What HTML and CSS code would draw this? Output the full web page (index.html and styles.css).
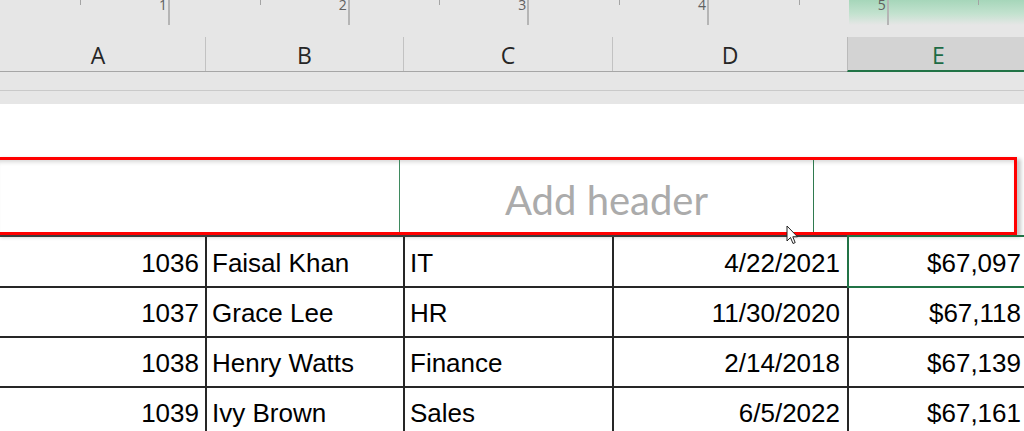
FILE: index.html
```html
<!DOCTYPE html>
<html>
<head>
<meta charset="utf-8">
<link rel="stylesheet" href="styles.css">
</head>
<body>
<div class="ruler">
  <div class="seg"><span class="num">1</span></div>
  <div class="seg"><span class="num">2</span></div>
  <div class="seg"><span class="num">3</span></div>
  <div class="seg"><span class="num">4</span></div>
  <div class="seg"><span class="num">5</span></div>
  <div class="seg"><span class="num">6</span></div>
</div>
<div class="colheads">
  <div class="ch ch-a">A</div>
  <div class="ch ch-b">B</div>
  <div class="ch ch-c">C</div>
  <div class="ch ch-d">D</div>
  <div class="ch ch-e">E</div>
</div>
<div class="band"></div>
<div class="band2"></div>
<div class="sheet">
  <div class="hdrbox">
    <div class="sec sec-left"></div>
    <div class="sec sec-mid">Add header</div>
    <div class="sec sec-right"></div>
  </div>
  <div class="tbl">
    <div class="row row-first">
      <div class="cell c-a num-r">1036</div>
      <div class="cell c-b">Faisal Khan</div>
      <div class="cell c-c">IT</div>
      <div class="cell c-d num-r">4/22/2021</div>
      <div class="cell c-e num-r selected">$67,097</div>
    </div>
    <div class="row">
      <div class="cell c-a num-r">1037</div>
      <div class="cell c-b">Grace Lee</div>
      <div class="cell c-c">HR</div>
      <div class="cell c-d num-r">11/30/2020</div>
      <div class="cell c-e num-r">$67,118</div>
    </div>
    <div class="row">
      <div class="cell c-a num-r">1038</div>
      <div class="cell c-b">Henry Watts</div>
      <div class="cell c-c">Finance</div>
      <div class="cell c-d num-r">2/14/2018</div>
      <div class="cell c-e num-r">$67,139</div>
    </div>
    <div class="row">
      <div class="cell c-a num-r">1039</div>
      <div class="cell c-b">Ivy Brown</div>
      <div class="cell c-c">Sales</div>
      <div class="cell c-d num-r">6/5/2022</div>
      <div class="cell c-e num-r">$67,161</div>
    </div>
  </div>
</div>
<svg class="cursor" width="14" height="22" viewBox="0 0 14 22">
  <path d="M1 1 L1 16 L4.5 12.5 L7 18.5 L9.2 17.6 L6.8 11.8 L11.5 11.8 Z" fill="#fff" stroke="#222" stroke-width="1"/>
</svg>
</body>
</html>
```

FILE: styles.css
```css
* { box-sizing: border-box; }
html, body { margin: 0; padding: 0; }
body {
  width: 1024px;
  height: 431px;
  overflow: hidden;
  background: #fff;
  position: relative;
  font-family: "Liberation Sans", Arial, sans-serif;
}

/* ruler */
.ruler {
  display: flex;
  height: 37px;
  margin-left: -9.7px;
  width: 1200px;
  background-color: #e6e6e6;
  background-image: linear-gradient(#a6d6ba, #c3e2cf 55%, #e6e6e6);
  background-repeat: no-repeat;
  background-position: 858.7px 0;
  background-size: 400px 25px;
}
.seg {
  flex: none;
  width: 179.7px;
  height: 25px;
  border-right: 2px solid #b5b5b5;
  background-image: linear-gradient(#a4a4a4, #a4a4a4);
  background-repeat: no-repeat;
  background-size: 1px 5px;
  background-position: 89.5px 0;
  text-align: right;
  padding-right: 1px;
}
.num {
  display: block;
  font-family: "Open Sans", sans-serif;
  font-size: 14px;
  line-height: 14px;
  margin-top: -2px;
  color: #606060;
}

/* column headers */
.colheads {
  display: flex;
  height: 35px;
  margin-left: -9px;
  background: #e6e6e6;
  border-bottom: 1px solid #a6a6a6;
}
.ch {
  flex: none;
  display: flex;
  align-items: center;
  justify-content: center;
  font-family: "Open Sans", sans-serif;
  font-size: 23px;
  color: #262626;
  padding-top: 2px;
  border-right: 1px solid #c2c2c2;
}
.ch-a { width: 215px; }
.ch-b { width: 198px; }
.ch-c { width: 209px; }
.ch-d { width: 234px; border-right: none; }
.ch-e {
  width: 182px;
  background: #d3d3d3;
  color: #1d6b45;
  border-right: none;
  border-left: 1px solid #bababa;
  border-bottom: 2px solid #217346;
  margin-bottom: -1px;
}

.band {
  height: 19px;
  background: #e6e6e6;
  border-bottom: 1px solid #c9c9c9;
}
.band2 {
  height: 13px;
  background: #e6e6e6;
}

/* page */
.sheet {
  padding-top: 53px;
  background: #fff;
}
.hdrbox {
  display: flex;
  height: 78px;
  width: 1021px;
  margin-left: -4px;
  border: 3px solid #ff0000;
  box-shadow: 4px 2px 4px rgba(0, 0, 0, 0.22), inset 0 4px 4px -2px rgba(0, 0, 0, 0.16);
}
.sec { height: 100%; }
.sec-left {
  flex: none;
  width: 401px;
  border-right: 1px solid #3f8a5f;
}
.sec-mid {
  flex: none;
  width: 414px;
  border-right: 1px solid #2f7a4f;
  display: flex;
  align-items: center;
  justify-content: center;
  padding-top: 7px;
  font-family: Lato, "Open Sans", sans-serif;
  font-size: 40px;
  color: #ababab;
}
.sec-right { flex: 1; }

/* table */
.tbl {
  margin-left: -9px;
  border-top: 2px solid #3c3c3c;
}
.row {
  display: flex;
  height: 50px;
}
.row-first { height: 51px; }
.cell {
  flex: none;
  height: 100%;
  display: flex;
  align-items: flex-end;
  padding: 0 5px 8px 5px;
  font-size: 26px;
  line-height: 30px;
  color: #000;
  white-space: nowrap;
  border-bottom: 2px solid #262626;
  border-right: 2px solid #262626;
}
.num-r { justify-content: flex-end; }
.c-a { width: 216px; padding-right: 6px; }
.c-b { width: 198px; }
.c-c { width: 209px; }
.c-d { width: 235px; padding-right: 7px; }
.c-e { width: 180px; border-right: none; padding-right: 8px; }
.selected {
  border-bottom-color: #217346;
  box-shadow: -2px 0 0 #217346, 0 -2px 0 #217346, -2px -2px 0 #217346;
}

.cursor {
  position: absolute;
  left: 786px;
  top: 225px;
}
```
